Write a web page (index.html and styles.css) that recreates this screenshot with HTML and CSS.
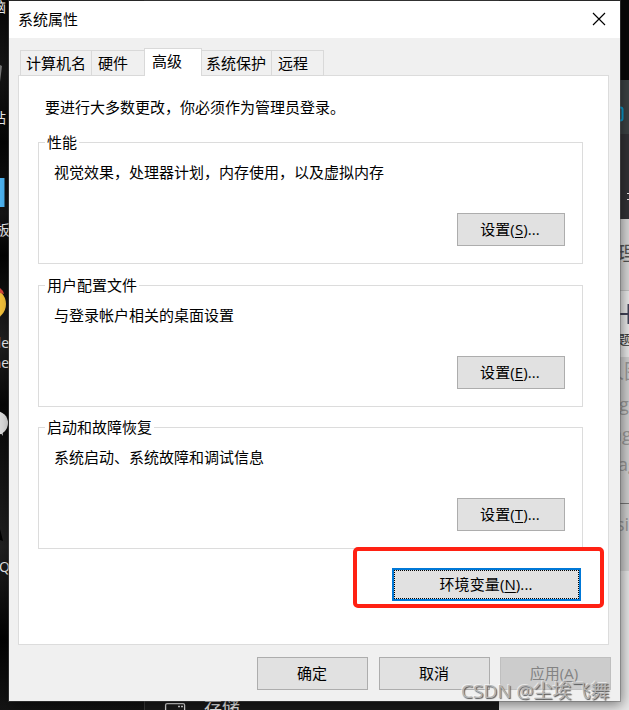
FILE: index.html
```
<!DOCTYPE html>
<html lang="zh-CN">
<head>
<meta charset="utf-8">
<title>系统属性</title>
<link rel="stylesheet" href="styles.css">
</head>
<body>
<div class="desktop">
  <svg class="scene" width="629" height="710" viewBox="0 0 629 710">
    <defs>
      <linearGradient id="wall" x1="0" y1="0" x2="0" y2="1">
        <stop offset="0" stop-color="#060606"/><stop offset=".1" stop-color="#161616"/><stop offset=".2" stop-color="#050505"/><stop offset=".3" stop-color="#151515"/><stop offset=".36" stop-color="#030303"/><stop offset=".48" stop-color="#202020"/><stop offset=".57" stop-color="#070707"/><stop offset=".77" stop-color="#202020"/><stop offset=".9" stop-color="#030303"/><stop offset="1" stop-color="#141414"/>
      </linearGradient>
    </defs>
    <rect width="629" height="710" fill="url(#wall)"/>
    <rect x="144" width="355" height="710" fill="#1a1a1a"/>
    <rect x="144" y="700" width="1" height="10" fill="#3a3a3a"/>
    <rect x="499" y="571" width="130" height="139" fill="#e8e8e8"/>
    <rect x="615" width="14" height="80" fill="#080808"/>
    <rect x="615" y="80" width="14" height="54" fill="#3c4244"/>
    <rect x="615" y="134" width="14" height="85" fill="#323236"/>
    <rect x="615" y="219" width="14" height="71" fill="#dadada"/>
    <rect x="615" y="290" width="14" height="67" fill="#ebebeb"/>
    <rect x="615" y="357" width="14" height="214" fill="#d2d2d2"/>
    <path d="M615 290.500H629" stroke="#c4c4c4"/>
    <path d="M615 503.500H629" stroke="#777"/>
    <rect x="612" y="107.500" width="10.500" height="13" rx="2" fill="none" stroke="#0a9fd4" stroke-width="2"/>
    <path d="M627 193.500h2M627 199.500h2" stroke="#eee"/>
    <path d="M615 314H629M628.500 304v20" stroke="#44445a" stroke-width="2"/>
    <path d="M0 65l2 1-2 16z" fill="#777"/>
    <rect x="-10" y="178" width="14.500" height="29" fill="#4db4f2"/>
    <circle cx="-10" cy="304" r="16" fill="#f3c13a"/>
    <path d="M0 288q3 2 4 6l-4-1z" fill="#d4473b"/>
    <ellipse cx="-4" cy="423" rx="12" ry="12" fill="#ddd"/>
    <path d="M0 432l3 4-1-7z" fill="#ddd"/>
    <path d="M0 529l3 12-3-1z" fill="#000"/>
    <g fill="none" stroke="#ddd" stroke-width="1.300"><rect x="165.600" y="703.600" width="19" height="12" rx="1.500"/><path d="M178 706.500h2M181 706.500h2"/></g>
  </svg>
  <div class="behind label l1">脑</div>
  <div class="behind label l2">站</div>
  <div class="behind label l3">板</div>
  <div class="behind label l4">le</div>
  <div class="behind label l5">me</div>
  <div class="behind label l6">Q</div>
  <div class="behind store">存储</div>
  <div class="behind side s1">理</div>
  <div class="behind side s2">题</div>
  <div class="behind side s3">人图</div>
  <div class="behind side s4">ag</div>
  <div class="behind side s5">ag</div>
  <div class="behind side s6">ag</div>
  <div class="behind side s7">siz</div>

  <main class="window">
    <header class="titlebar">
      <h1>系统属性</h1>
      <svg class="close" width="14" height="14" viewBox="0 0 14 14"><path d="M1 1L13 13M13 1L1 13" stroke="#000" stroke-width="1.150"/></svg>
    </header>
    <nav class="tabs">
      <span class="tab computer">计算机名</span><span class="tab hardware">硬件</span><span class="tab active">高级</span><span class="tab protect">系统保护</span><span class="tab remote">远程</span>
    </nav>
    <section class="panel">
      <p class="notice">要进行大多数更改，你必须作为管理员登录。</p>
      <div class="group">
        <h2>性能</h2>
        <p>视觉效果，处理器计划，内存使用，以及虚拟内存</p>
        <div class="button">设置(<u>S</u>)...</div>
      </div>
      <div class="group">
        <h2>用户配置文件</h2>
        <p>与登录帐户相关的桌面设置</p>
        <div class="button">设置(<u>E</u>)...</div>
      </div>
      <div class="group third">
        <h2>启动和故障恢复</h2>
        <p>系统启动、系统故障和调试信息</p>
        <div class="button">设置(<u>T</u>)...</div>
      </div>
      <div class="button env"><span>环境变量(<u>N</u>)...</span></div>
    </section>
    <footer class="actions">
      <div class="button">确定</div>
      <div class="button">取消</div>
      <div class="button disabled">应用(<u>A</u>)</div>
    </footer>
  </main>
  <div class="highlight"></div>
  <div class="watermark">CSDN @尘埃飞舞</div>
</div>
</body>
</html>
```
FILE: styles.css
```
* { box-sizing: border-box; }
body {
  margin: 0;
  font: 15px/20px "Open Sans", "Noto Sans CJK SC", sans-serif;
  color: #000;
}
h1, h2, p { margin: 0; font-size: 15px; font-weight: 400; }
u { text-decoration: underline; text-underline-offset: 2px; text-decoration-thickness: 1px; }
.desktop {
  position: relative;
  width: 629px;
  height: 710px;
  overflow: hidden;
  padding: 1px 0 0 9px;
  white-space: nowrap;
}
.scene { position: absolute; left: 0; top: 0; }
.behind { position: absolute; }
.label { right: 620px; color: #eee; font-size: 14px; }
.l1 { top: -3px; right: 623px; }
.l2 { top: 108px; right: 623px; }
.l3 { top: 220px; right: 619px; }
.l4 { top: 333px; }
.l5 { top: 353px; }
.l6 { top: 557px; right: 619px; }
.store { left: 204px; top: 697px; color: #eee; font-size: 18px; }
.side { color: #999; font-size: 18px; }
.s1 { top: 244px; left: 617px; color: #555; font-size: 20px; }
.s2 { top: 329px; left: 618px; color: #333; font-size: 13px; }
.s3 { top: 362px; left: 604px; font-size: 20px; }
.s4 { top: 394px; left: 609px; }
.s5 { top: 424px; left: 612px; }
.s6 { top: 454px; left: 618px; }
.s7 { top: 514px; left: 616px; }

.window {
  position: relative;
  width: 611px;
  height: 700px;
  background: #f0f0f0;
  box-shadow: 0 0 0 1px #5b5b5b66, 2px 4px 12px #0007;
}
.titlebar {
  display: flex;
  align-items: center;
  justify-content: space-between;
  height: 37px;
  padding: 0 14px 0 9px;
  background: #fff;
}
.titlebar h1 { padding-bottom: 2px; }
.close { display: block; margin-bottom: 1px; }
.tabs {
  display: flex;
  align-items: flex-end;
  height: 38px;
  padding-left: 11px;
  position: relative;
  z-index: 1;
}
.tab {
  height: 26px;
  padding: 2px 0 0 5px;
  border: 1px solid #d9d9d9;
  margin-right: -1px;
}
.computer { width: 72px; }
.hardware { width: 54px; padding-left: 6px; }
.active {
  width: 58px;
  height: 28px;
  padding: 2px 0 0 7px;
  background: #fff;
  border-bottom: 0;
}
.protect { width: 71px; padding-left: 4px; }
.remote { width: 53px; padding-left: 6px; }
.panel {
  width: 591px;
  height: 570px;
  margin: -1px 0 0 9px;
  padding: 21px 25px 0 19px;
  background: #fff;
  border: 1px solid #dcdcdc;
}
.notice { height: 20px; margin: 0 0 25px 7px; }
.group {
  display: flex;
  flex-direction: column;
  width: 545px;
  height: 122px;
  margin-bottom: 21px;
  border: 1px solid #dcdcdc;
}
.group:nth-of-type(2) { margin-bottom: 20px; }
.group h2 {
  align-self: flex-start;
  height: 20px;
  margin: -11px 0 0 6px;
  padding: 0 2px;
  background: #fff;
}
.group p { margin: 10px 0 0 15px; }
.button {
  display: flex;
  align-items: center;
  justify-content: center;
  width: 108px;
  height: 33px;
  padding: 0 1px 2px 0;
  background: #e1e1e1;
  border: 1px solid #adadad;
  white-space: pre;
}
.group .button { margin: 31px 17px 0 auto; padding-right: 2px; letter-spacing: .1px; }
.group.third { margin-bottom: 19px; }
.env {
  width: 189px;
  margin: 0 2px 0 auto;
  padding: 0;
  border: 2px solid #0078d7;
}
.env span {
  display: flex;
  align-items: center;
  justify-content: center;
  width: 100%;
  height: 100%;
  padding: 0 1px 2px 0;
  border: 1px dotted #000;
  letter-spacing: .1px;
}
.actions {
  display: flex;
  gap: 11px;
  padding: 12px 0 0 248px;
}
.actions .button { width: 111px; }
.actions .disabled { margin-left: -1px; padding-right: 3px; color: #838383; background: #ccc; border-color: #bfbfbf; }
.highlight {
  position: absolute;
  left: 353px;
  top: 547px;
  width: 251px;
  height: 61px;
  border: 4px solid #ff2113;
  border-radius: 5px;
}
.watermark {
  position: absolute;
  left: 461px;
  top: 680px;
  font-size: 19px;
  line-height: 22px;
  color: #b4b4b4;
  text-shadow: 1px 1px 1px #555, -1px -1px 0 #fff8;
}
```
